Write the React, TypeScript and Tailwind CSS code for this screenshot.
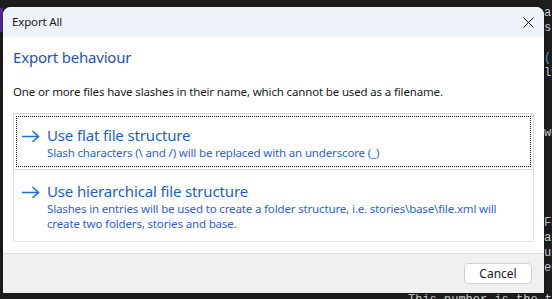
import React from "react";

const Arrow: React.FC = () => (
  <svg width="19" height="13" viewBox="0 0 19 13" className="shrink-0 mt-[5px]">
    <path d="M1 6.5H17.5M11.5 1L17.5 6.5L11.5 12" fill="none" stroke="#1a6fe0" strokeWidth="1.6" />
  </svg>
);

const codeRight = ["a", "s", "", "(", "ly", "", "", "", "wo", "", "", "", "", "", "Fa", "an", "un", "eC", "", "mp", " b"];

const App: React.FC = () => {
  return (
    <div className="relative w-[552px] h-[299px] overflow-hidden bg-[#1e1e1e]" style={{ fontFamily: '"Noto Sans", sans-serif' }}>
      {/* editor behind the dialog */}
      <div className="absolute left-[544px] top-[6px] w-[8px] h-[286px] overflow-hidden font-['Liberation_Mono',monospace] text-[12px] leading-[15px] text-[#d4d4d4]">
        {codeRight.map((l, i) => (
          <div key={i} className={l === "(" ? "text-[#4fa3e8]" : ""}>{l || "\u00a0"}</div>
        ))}
      </div>
      <div className="absolute left-[408px] top-[293px] font-['Liberation_Mono',monospace] text-[12px] leading-[15px] text-[#d4d4d4] whitespace-pre">
        This number is the tex
      </div>
      <div className="absolute left-0 top-[8px] w-[3px] h-[24px] bg-[#5a2a9c]" />

      <div className="relative pl-[3px] pt-[7px]">
        <div className="flex flex-col w-[541px] h-[286px] rounded-t-[8px] overflow-hidden bg-white shadow-[0_0_6px_rgba(0,0,0,0.4)]">
          {/* title bar */}
          <div className="flex items-center justify-between h-[30px] bg-[#eef3f9] pl-[9px] pr-[10px]">
            <span className="text-[11.5px] tracking-[-0.15px] text-[#1a1a1a]">Export All</span>
            <svg width="11" height="11" viewBox="0 0 11 11">
              <path d="M0.5 0.5L10.5 10.5M10.5 0.5L0.5 10.5" stroke="#1a1a1a" strokeWidth="1" />
            </svg>
          </div>

          {/* body */}
          <div className="flex-1 flex flex-col px-[10px] pt-[10px]">
            <div className="text-[15px] leading-[21px] tracking-[-0.2px] text-[#1f4fbf]">Export behaviour</div>
            <div className="mt-[16px] text-[11.5px] leading-[16px] tracking-[-0.15px] text-[#1a1a1a]">
              One or more files have slashes in their name, which cannot be used as a filename.
            </div>

            <div className="mt-[13px] border border-[#c6dbee] p-[2px]">
              <div className="flex gap-[7px] h-[51px] border border-dotted border-[#1a1a1a] pl-[4px] pt-[8px]">
                <Arrow />
                <div>
                  <div className="text-[15px] leading-[20px] tracking-[-0.15px] text-[#1b5ed6]">Use flat file structure</div>
                  <div className="text-[11.5px] leading-[16px] tracking-[-0.15px] text-[#2b62e3]">
                    Slash characters (\ and /) will be replaced with an underscore (_)
                  </div>
                </div>
              </div>
            </div>

            <div className="flex gap-[7px] h-[72px] border border-t-0 border-[#e3e3e3] pl-[7px] pt-[11px]">
              <Arrow />
              <div>
                <div className="text-[15px] leading-[20px] tracking-[-0.15px] text-[#1b5ed6]">Use hierarchical file structure</div>
                <div className="text-[11.5px] leading-[15px] tracking-[-0.15px] text-[#2b62e3]">
                  Slashes in entries will be used to create a folder structure, i.e. stories\base\file.xml will
                  <br />
                  create two folders, stories and base.
                </div>
              </div>
            </div>
          </div>

          {/* footer */}
          <div className="flex items-center justify-end h-[40px] bg-[#f0f0f0] border-t border-[#dedede] pr-[12px]">
            <button className="w-[68px] h-[21px] rounded-[4px] bg-white border border-[#d0d0d0] text-[12px] text-[#1a1a1a]">
              Cancel
            </button>
          </div>
        </div>
      </div>
    </div>
  );
};

export default App;
